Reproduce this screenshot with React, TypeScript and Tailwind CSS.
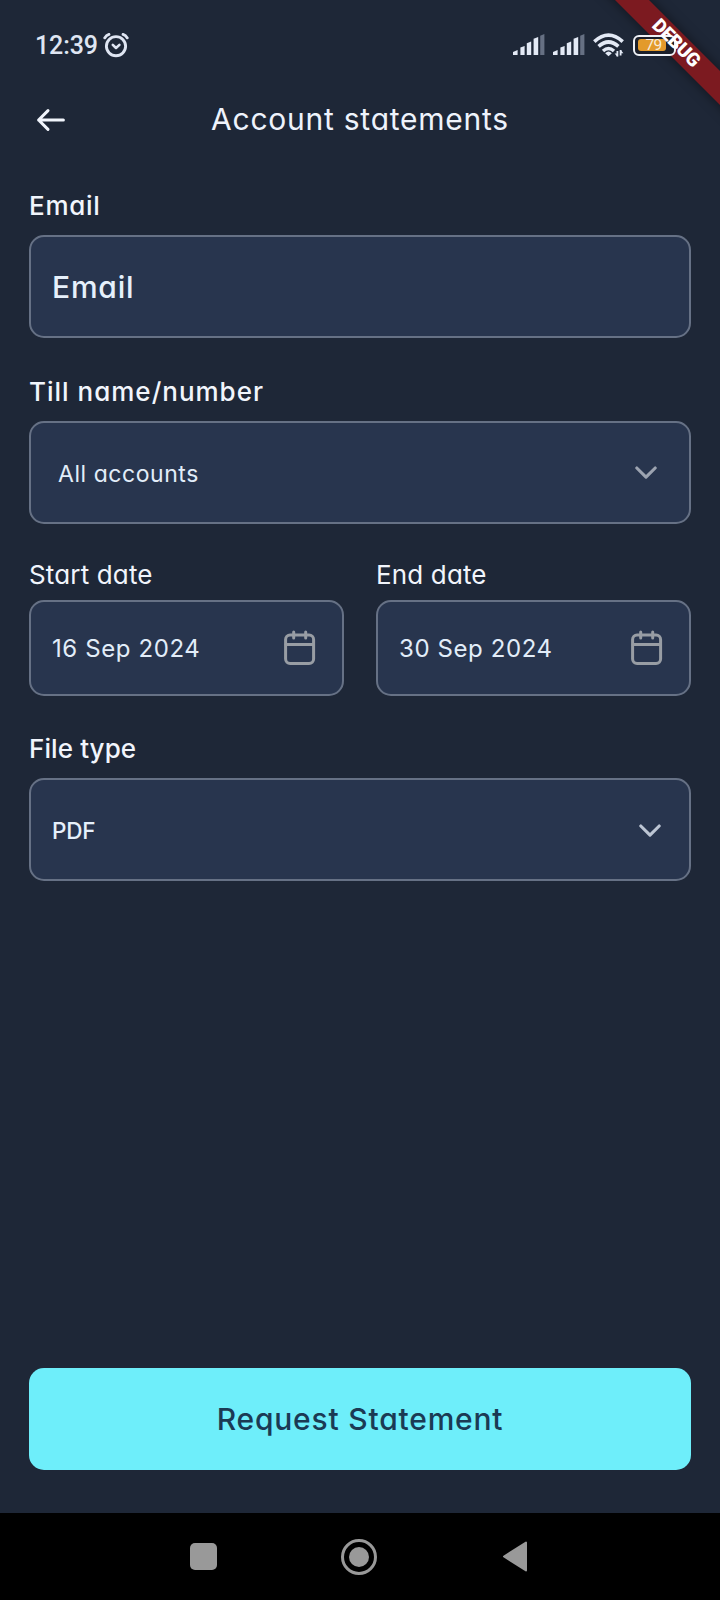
import { ReactNode } from "react";

const fields = {
    box: "w-full rounded-[15px] border-2 border-[#667185] bg-[#28354e] flex items-center justify-between",
    label: "h-[30px] leading-[30px] text-[26px] text-[#f1f5fc] whitespace-nowrap",
};

const SignalBars = () => (
    <svg width="32" height="22" viewBox="0 0 32 22" fill="#e3e9f5">
        <path d="M0 21 V18 L4.6 16 V21Z" />
        <path d="M7.4 21 V13.6 L11.6 12 V21Z" />
        <path d="M13.8 21 V9.2 L18.2 7.4 V21Z" />
        <path d="M20.6 21 V4.8 L25.2 3 V21Z" />
        <path d="M27.2 21 V1.8 L31.4 0 V21Z" fill="#667083" />
    </svg>
);

const AlarmIcon = () => (
    <svg width="26" height="25" viewBox="0 0 26 25" fill="none" stroke="#dfe5f2" strokeLinecap="round">
        <circle cx="13" cy="13.2" r="9.6" strokeWidth="2.9" />
        <path d="M1.7 4.9 Q3.3 2.3 6 1.4 M24.3 4.9 Q22.7 2.3 20 1.4" strokeWidth="2.8" />
        <path d="M9.8 11.9 L13 15 L16.4 11.9" strokeWidth="2.6" strokeLinejoin="round" />
    </svg>
);

const WifiIcon = () => (
    <svg width="32" height="24" viewBox="0 0 32 24" fill="none" stroke="#e3e9f5">
        <path d="M1.3 8.6 Q15.5 -4.4 29.7 8.6" strokeWidth="3.6" />
        <path d="M5.6 13.4 Q15.5 4.6 25.4 13.4" strokeWidth="3.6" />
        <path d="M10 18 Q15.5 13 21 18" strokeWidth="3.4" />
        <path d="M12.2 20.2 Q15.5 17 18.8 20.2 L15.5 23.2Z" fill="#e3e9f5" stroke="none" />
        <path d="M24.4 18 V23.6 M27.6 17 V22.6" strokeWidth="1.8" />
        <path d="M21.6 20.4 L24.4 23.8 V20.4Z M30.4 20.2 L27.6 16.8 V20.2Z" fill="#e3e9f5" stroke="none" />
    </svg>
);

const Battery = () => (
    <div className="flex items-center">
        <div className="flex h-[21px] w-[43px] rounded-[6px] border-2 border-[#eef1f6] bg-[#1b1f2a] p-[2.5px]">
            <div className="h-full w-[28px] rounded-[3px] bg-[#e39a2b] pl-[8px] text-[15.5px] leading-[13px] tracking-[-0.6px] text-[#f7ecd9]">79</div>
        </div>
        <div className="h-2 w-[2px] rounded-r-sm bg-[#eef1f6]" />
    </div>
);

const CalendarIcon = () => (
    <svg width="32" height="36" viewBox="0 0 32 36" fill="none" stroke="#989da4" strokeWidth="3" strokeLinecap="round">
        <rect x="1.6" y="5" width="28" height="28.4" rx="4.5" />
        <path d="M2 14.6 H29.4 M9.7 2 V8 M21.7 2 V8" />
    </svg>
);

const Chevron = ({ color }: { color: string }) => (
    <svg width="22" height="14" viewBox="0 0 22 14" fill="none" stroke={color} strokeWidth="3.1" strokeLinecap="round" strokeLinejoin="round">
        <path d="M1.8 2 L11 11.2 L20.2 2" />
    </svg>
);

const DateField = ({ label, children }: { label: string; children: ReactNode }) => (
    <div className="w-[315px]">
        <p className={`${fields.label} tracking-[0.15px] mb-2.5`}>{label}</p>
        <div className={`${fields.box} h-24 pl-[21px] pr-[26px]`}>
            <span className="pt-0.5 text-[24px] tracking-[0.6px] text-[#e2edf9]">{children}</span>
            <CalendarIcon />
        </div>
    </div>
);

const App = () => {
    return (
        <div className="relative flex h-[1600px] w-[720px] flex-col overflow-hidden bg-[#1e2737] font-['Inter','Open_Sans',sans-serif] [font-feature-settings:'cv11']">
            {/* debug ribbon sits under the status icons */}
            <div className="absolute left-[526px] top-8 h-6 w-[300px] rotate-45 bg-[#7c1a20] shadow-[0_0_12px_rgba(0,0,0,0.5)]" />

            <div className="relative flex h-[88px] items-center justify-between pl-[35px] pr-[42px] pt-[2px] font-[Roboto,sans-serif]">
                <div className="flex items-center gap-[5px] text-[#dfe5f2]">
                    <span className="pt-[2px] text-[25px] font-medium leading-[30px] tracking-[-0.1px]">12:39</span>
                    <AlarmIcon />
                </div>
                <div className="flex items-center gap-[8px]">
                    <SignalBars />
                    <SignalBars />
                    <WifiIcon />
                    <Battery />
                </div>
            </div>
            <span className="absolute left-[636px] top-[31px] w-20 rotate-45 text-center font-[Roboto,sans-serif] text-[19px] font-black leading-6 tracking-[-0.4px] text-white">DEBUG</span>

            <header className="relative flex h-[64px] items-center justify-center">
                <svg className="absolute left-[36px] top-[20px]" width="30" height="24" viewBox="0 0 30 24" fill="none" stroke="#f1f5fc" strokeWidth="3" strokeLinecap="round" strokeLinejoin="round">
                    <path d="M27.4 12 H2.6 M12 2.6 L2.6 12 L12 21.4" />
                </svg>
                <h1 className="pb-[2px] text-[30px] leading-9 tracking-[0.75px] text-[#eef3fc]">Account statements</h1>
            </header>

            <main className="flex flex-1 flex-col px-[29px] pt-[39px]">
                <p className={`${fields.label} font-medium tracking-[0.7px] mb-3.5`}>Email</p>
                <div className={`${fields.box} h-[103px] pl-[21px] pt-[2px] text-[30px] font-medium tracking-[0.8px] text-[#e6f0fb]`}>Email</div>

                <p className={`${fields.label} font-medium tracking-[1px] mb-3.5 mt-[39px]`}>Till name/number</p>
                <div className={`${fields.box} h-[103px] pl-[27px] pr-[32px]`}>
                    <span className="pt-[4px] text-[23px] tracking-[0.55px] text-[#e2edf9]">All accounts</span>
                    <Chevron color="#9ca3b0" />
                </div>

                <div className="mt-9 flex justify-between">
                    <DateField label="Start date">16 Sep 2024</DateField>
                    <DateField label="End date">30 Sep 2024</DateField>
                </div>

                <p className={`${fields.label} font-medium tracking-[0.1px] mb-3.5 mt-[38px]`}>File type</p>
                <div className={`${fields.box} h-[103px] pl-[21px] pr-[28px] pt-[3px]`}>
                    <span className="text-[22.5px] font-medium tracking-[-0.2px] text-[#e6f0fb]">PDF</span>
                    <Chevron color="#bcc5d3" />
                </div>

                <button className="mb-[43px] mt-auto h-[102px] rounded-[15px] bg-[#6eeefa] text-[30px] font-medium tracking-[0.8px] text-[#1b3a54]">
                    Request Statement
                </button>
            </main>

            <nav className="flex h-[87px] items-center bg-black pl-[190px]">
                <div className="h-[27px] w-[27px] rounded-[5px] bg-[#999]" />
                <div className="ml-[124px] flex h-9 w-9 items-center justify-center rounded-full border-[3px] border-[#999]">
                    <div className="h-5 w-5 rounded-full bg-[#999]" />
                </div>
                <svg className="ml-[125px]" width="26" height="31" viewBox="0 0 26 31" fill="#999" stroke="#999" strokeWidth="2" strokeLinejoin="round">
                    <path d="M24 1.5 V29.5 L2 15.5Z" />
                </svg>
            </nav>
        </div>
    );
};

export default App;
